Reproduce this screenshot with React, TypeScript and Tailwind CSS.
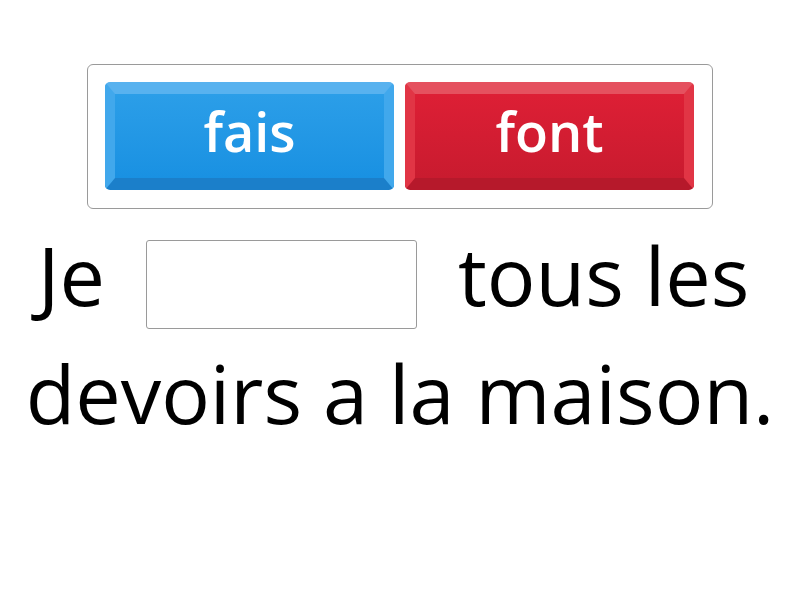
import React from "react";

const font = { fontFamily: '"Open Sans", "Noto Sans", sans-serif' };

export default function App() {
  return (
    <div className="w-[800px] h-[600px] bg-white flex flex-col items-center" style={font}>
      <div className="mt-[64px] w-[626px] h-[145px] border border-[#9a9a9a] rounded-[6px] flex gap-[11px] pl-[17px] pt-[17px]">
        <button className="w-[289px] h-[108px] rounded-[5px] border-t-[12px] border-x-[10px] border-b-[12px] border-t-[#58b2ef] border-x-[#41a8ec] border-b-[#1b7fca] bg-gradient-to-b from-[#2b9ee8] to-[#1991e2] text-white text-[54px] font-semibold leading-none flex items-center justify-center pb-[10px]">
          <span>fais</span>
        </button>
        <button className="w-[289px] h-[108px] rounded-[5px] border-t-[12px] border-x-[10px] border-b-[12px] border-t-[#e5515f] border-x-[#e13545] border-b-[#b6192b] bg-gradient-to-b from-[#dd1f35] to-[#c91b2f] text-white text-[54px] font-semibold leading-none flex items-center justify-center pb-[10px]">
          <span>font</span>
        </button>
      </div>
      <div className="w-[800px] text-center text-black text-[81px] leading-[118px] mt-[7px]">
        <span>Je</span>
        <span className="inline-block align-[-23px] mx-[41px] w-[271px] h-[89px] border border-[#9a9a9a] rounded-[3px]"></span>
        <span className="mr-[13px]">tous les</span>
        <br />
        <span>devoirs a la maison.</span>
      </div>
    </div>
  );
}
